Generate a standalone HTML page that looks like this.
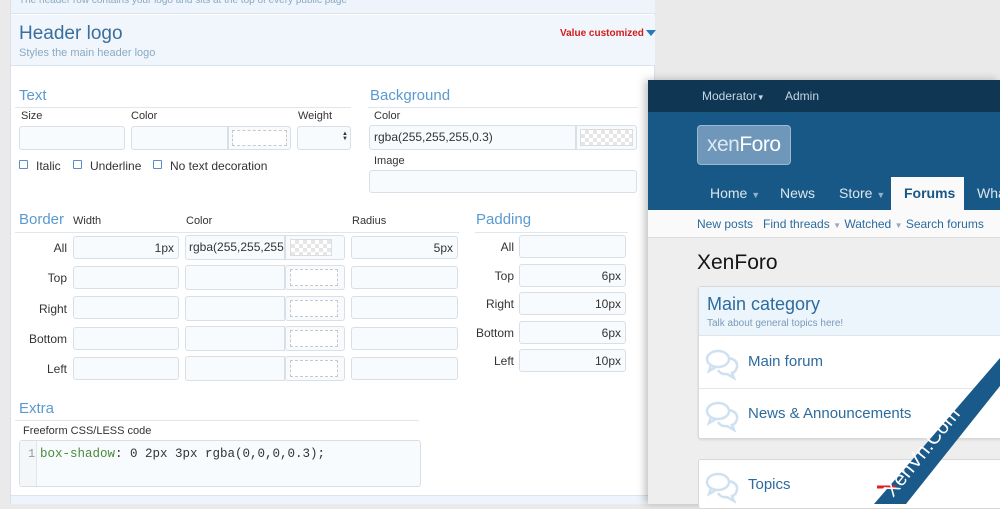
<!DOCTYPE html>
<html><head><meta charset="utf-8"><style>
*{box-sizing:border-box;margin:0;padding:0}
body{width:1000px;height:504px;overflow:hidden;background:#eaeaea;font-family:"Liberation Sans",sans-serif;position:relative;color:#141414}
.a{position:absolute}
.panel{left:10px;top:0;width:645px;height:504px;background:#fff;border-left:1px solid #dde;border-right:1px solid #dde}
.lbl{font-size:11px;color:#333}
.h{font-size:15px;color:#5a9ad0}
.line{height:1px;background:#dfe6ee}
.in{border:1px solid #d8dfe6;background:#f8fbfd;border-radius:3px;font-size:11px;color:#333;line-height:22px;padding:0 4px}
.r{text-align:right}
.sw{border:1px dashed #c8c8c8;background:#fff}
.chk{background:repeating-conic-gradient(#e6e6e6 0 25%,#fff 0 50%) 0 0/8px 8px;border:1px solid #ddd}
.cb{width:9px;height:9px;border:1px solid #5a8fc5;border-radius:1px}
.rl{font-size:12px;color:#333;text-align:right;width:48px}
</style></head><body>
<div class="a panel"></div>
<div class="a" style="left:11px;top:0;width:644px;height:14px;background:#edf4fb;border-bottom:1px solid #dbe3ec"></div>
<div class="a" style="left:19px;top:-5px;font-size:10px;color:#8aa9c4">The header row contains your logo and sits at the top of every public page</div>
<div class="a" style="left:11px;top:15px;width:644px;height:51px;background:#f0f6fc;border-bottom:1px solid #dbe3ec"></div>
<div class="a" style="left:19px;top:23px;font-size:19px;color:#3a6e9c">Header logo</div>
<div class="a" style="left:19px;top:47px;font-size:11px;color:#8aa9c4">Styles the main header logo</div>
<div class="a" style="left:560px;top:28px;font-size:10px;color:#d21c1c;font-weight:bold">Value customized</div>
<div class="a" style="left:646px;top:30px;width:0;height:0;border-left:5px solid transparent;border-right:5px solid transparent;border-top:6px solid #2a77c0"></div>

<div class="a h" style="left:19px;top:87px">Text</div>
<div class="a line" style="left:15px;top:107px;width:260px"></div>
<div class="a line" style="left:274px;top:107px;width:77px"></div>
<div class="a lbl" style="left:21px;top:110px">Size</div>
<div class="a lbl" style="left:131px;top:110px">Color</div>
<div class="a lbl" style="left:298px;top:110px">Weight</div>
<div class="a in" style="left:19px;top:126px;width:106px;height:24px"></div>
<div class="a in" style="left:131px;top:126px;width:97px;height:24px;border-radius:3px 0 0 3px"></div>
<div class="a in" style="left:228px;top:126px;width:63px;height:24px;border-radius:0 3px 3px 0;padding:3px"><div class="sw" style="width:100%;height:100%"></div></div>
<div class="a in" style="left:297px;top:126px;width:54px;height:24px"></div>
<div class="a" style="left:342px;top:132px;font-size:6px;line-height:5px;color:#333">▲<br>▼</div>
<div class="a cb" style="left:19px;top:160px"></div><div class="a lbl" style="left:36px;top:159px;font-size:12px">Italic</div>
<div class="a cb" style="left:73px;top:160px"></div><div class="a lbl" style="left:90px;top:159px;font-size:12px">Underline</div>
<div class="a cb" style="left:153px;top:160px"></div><div class="a lbl" style="left:170px;top:159px;font-size:12px">No text decoration</div>

<div class="a h" style="left:370px;top:87px">Background</div>
<div class="a line" style="left:368px;top:107px;width:270px"></div>
<div class="a lbl" style="left:374px;top:110px">Color</div>
<div class="a in" style="left:369px;top:125px;width:207px;height:25px;line-height:23px;font-size:12px;border-radius:3px 0 0 3px">rgba(255,255,255,0.3)</div>
<div class="a in" style="left:576px;top:125px;width:61px;height:25px;padding:3px;border-radius:0 3px 3px 0"><div class="chk" style="width:100%;height:100%"></div></div>
<div class="a lbl" style="left:374px;top:155px">Image</div>
<div class="a in" style="left:369px;top:170px;width:268px;height:23px"></div>

<div class="a h" style="left:19px;top:211px">Border</div>
<div class="a lbl" style="left:73px;top:215px">Width</div>
<div class="a lbl" style="left:186px;top:215px">Color</div>
<div class="a lbl" style="left:352px;top:215px">Radius</div>
<div class="a line" style="left:15px;top:232px;width:444px"></div>
<div class="a h" style="left:476px;top:211px">Padding</div>
<div class="a line" style="left:475px;top:232px;width:153px"></div>

<div class="a rl" style="left:19px;top:241px">All</div>
<div class="a rl" style="left:19px;top:271px">Top</div>
<div class="a rl" style="left:19px;top:302px">Right</div>
<div class="a rl" style="left:19px;top:332px">Bottom</div>
<div class="a rl" style="left:19px;top:362px">Left</div>

<div class="a in r" style="left:73px;top:236px;width:106px;height:23px;font-size:12px">1px</div>
<div class="a in" style="left:73px;top:266px;width:106px;height:23px"></div>
<div class="a in" style="left:73px;top:296px;width:106px;height:23px"></div>
<div class="a in" style="left:73px;top:327px;width:106px;height:23px"></div>
<div class="a in" style="left:73px;top:357px;width:106px;height:23px"></div>

<div class="a in" style="left:185px;top:235px;width:100px;height:25px;font-size:12px;overflow:hidden;white-space:nowrap;border-radius:3px 0 0 3px;padding:0 3px">rgba(255,255,255,</div>
<div class="a in" style="left:285px;top:235px;width:60px;height:25px;padding:3px 12px 3px 4px;border-radius:0 3px 3px 0"><div class="chk" style="width:100%;height:100%"></div></div>
<div class="a in" style="left:185px;top:265px;width:100px;height:25px;border-radius:3px 0 0 3px"></div><div class="a in" style="left:285px;top:265px;width:60px;height:25px;padding:3px 6px 3px 4px"><div class="sw" style="width:100%;height:100%"></div></div>
<div class="a in" style="left:185px;top:296px;width:100px;height:25px;border-radius:3px 0 0 3px"></div><div class="a in" style="left:285px;top:296px;width:60px;height:25px;padding:3px 6px 3px 4px"><div class="sw" style="width:100%;height:100%"></div></div>
<div class="a in" style="left:185px;top:326px;width:100px;height:25px;border-radius:3px 0 0 3px"></div><div class="a in" style="left:285px;top:326px;width:60px;height:25px;padding:3px 6px 3px 4px"><div class="sw" style="width:100%;height:100%"></div></div>
<div class="a in" style="left:185px;top:356px;width:100px;height:25px;border-radius:3px 0 0 3px"></div><div class="a in" style="left:285px;top:356px;width:60px;height:25px;padding:3px 6px 3px 4px"><div class="sw" style="width:100%;height:100%"></div></div>

<div class="a in r" style="left:351px;top:236px;width:107px;height:23px;font-size:12px">5px</div>
<div class="a in" style="left:351px;top:266px;width:107px;height:23px"></div>
<div class="a in" style="left:351px;top:296px;width:107px;height:23px"></div>
<div class="a in" style="left:351px;top:327px;width:107px;height:23px"></div>
<div class="a in" style="left:351px;top:357px;width:107px;height:23px"></div>

<div class="a rl" style="left:466px;top:240px">All</div>
<div class="a rl" style="left:466px;top:269px">Top</div>
<div class="a rl" style="left:466px;top:297px">Right</div>
<div class="a rl" style="left:466px;top:326px">Bottom</div>
<div class="a rl" style="left:466px;top:354px">Left</div>
<div class="a in" style="left:519px;top:235px;width:107px;height:23px"></div>
<div class="a in r" style="left:519px;top:264px;width:107px;height:23px;font-size:12px">6px</div>
<div class="a in r" style="left:519px;top:292px;width:107px;height:23px;font-size:12px">10px</div>
<div class="a in r" style="left:519px;top:321px;width:107px;height:23px;font-size:12px">6px</div>
<div class="a in r" style="left:519px;top:349px;width:107px;height:23px;font-size:12px">10px</div>

<div class="a h" style="left:19px;top:400px">Extra</div>
<div class="a line" style="left:15px;top:420px;width:404px"></div>
<div class="a lbl" style="left:23px;top:425px">Freeform CSS/LESS code</div>
<div class="a" style="left:19px;top:440px;width:402px;height:47px;border:1px solid #d8dfe6;border-radius:3px;background:#f8fbfd"></div>
<div class="a" style="left:20px;top:441px;width:17px;height:45px;border-right:1px solid #e2e6ea;background:#f4f7fa"></div>
<div class="a" style="left:28px;top:447px;font-family:'Liberation Mono',monospace;font-size:12px;color:#999">1</div>
<div class="a" style="left:40px;top:447px;font-family:'Liberation Mono',monospace;font-size:12.5px;color:#333;white-space:pre"><span style="color:#4a8a3a">box-shadow</span>: 0 2px 3px rgba(0,0,0,0.3);</div>
<div class="a" style="left:11px;top:495px;width:644px;height:9px;background:#edf4fb;border-top:1px solid #dbe3ec"></div>

<!-- overlay -->
<div class="a" style="left:648px;top:80px;width:352px;height:424px;background:#eeeeee;box-shadow:-3px 0 8px rgba(0,0,0,.25)"></div>
<div class="a" style="left:648px;top:80px;width:352px;height:32px;background:#0f3652"></div>
<div class="a" style="left:702px;top:89px;font-size:12px;color:#c5d6e6">Moderator<span style="font-size:8px">▼</span></div>
<div class="a" style="left:785px;top:89px;font-size:12px;color:#c5d6e6">Admin</div>
<div class="a" style="left:648px;top:112px;width:352px;height:98px;background:#185886"></div>
<div class="a" style="left:697px;top:125px;width:94px;height:40px;background:#6f97b9;border:1px solid #9cb9d2;border-radius:4px;font-size:21px;color:#dfe9f2;line-height:38px;padding-left:9px;letter-spacing:-.5px">xen<span style="color:#fff">Foro</span></div>
<div class="a" style="left:710px;top:185px;font-size:14px;color:#dbe6ef">Home <span style="font-size:9px;color:#8fb0cc">▼</span></div>
<div class="a" style="left:780px;top:185px;font-size:14px;color:#dbe6ef">News</div>
<div class="a" style="left:839px;top:185px;font-size:14px;color:#dbe6ef">Store <span style="font-size:9px;color:#8fb0cc">▼</span></div>
<div class="a" style="left:891px;top:177px;width:73px;height:33px;background:#fafafa"></div>
<div class="a" style="left:904px;top:185px;font-size:14px;color:#185886;font-weight:bold">Forums</div>
<div class="a" style="left:977px;top:185px;font-size:14px;color:#dbe6ef">Wha</div>
<div class="a" style="left:648px;top:210px;width:352px;height:28px;background:#fafafa;border-bottom:1px solid #dcdcdc"></div>
<div class="a" style="left:697px;top:217px;font-size:12px;color:#2d6b9e;white-space:nowrap">New posts &nbsp; Find threads <span style="font-size:8px;color:#9ab">▼</span> Watched <span style="font-size:8px;color:#9ab">▼</span> Search forums</div>
<div class="a" style="left:697px;top:251px;font-size:21px;color:#141414">XenForo</div>
<div class="a" style="left:698px;top:286px;width:310px;height:153px;background:#fff;border:1px solid #d8d8d8;border-radius:3px;box-shadow:0 1px 2px rgba(0,0,0,.1)"></div>
<div class="a" style="left:699px;top:287px;width:310px;height:49px;background:#edf5fc;border-bottom:1px solid #dde5ed"></div>
<div class="a" style="left:707px;top:294px;font-size:18px;color:#2d6b9e">Main category</div>
<div class="a" style="left:707px;top:318px;font-size:10px;color:#7a9ab8">Talk about general topics here!</div>
<div class="a" style="left:699px;top:388px;width:310px;height:1px;background:#e6e6e6"></div>
<div class="a" style="left:748px;top:353px;font-size:15px;color:#2d6b9e">Main forum</div>
<div class="a" style="left:748px;top:405px;font-size:15px;color:#2d6b9e">News &amp; Announcements</div>
<div class="a" style="left:698px;top:459px;width:310px;height:50px;background:#fff;border:1px solid #d8d8d8;border-radius:3px"></div>
<div class="a" style="left:748px;top:476px;font-size:15px;color:#2d6b9e">Topics</div>
<svg class="a" style="left:705px;top:348px" width="36" height="160" viewBox="0 0 36 160">
<g fill="none" stroke="#cfe1f0" stroke-width="2.5">
<g><ellipse cx="13" cy="11" rx="11" ry="8"/><path d="M6 17 L4 23 L11 19"/><path d="M24 10 Q33 12 32 19 Q31 24 27 25 L29 30 L22 26 Q16 27 13 22"/></g>
<g transform="translate(0,52)"><ellipse cx="13" cy="11" rx="11" ry="8"/><path d="M6 17 L4 23 L11 19"/><path d="M24 10 Q33 12 32 19 Q31 24 27 25 L29 30 L22 26 Q16 27 13 22"/></g>
<g transform="translate(0,123)"><ellipse cx="13" cy="11" rx="11" ry="8"/><path d="M6 17 L4 23 L11 19"/><path d="M24 10 Q33 12 32 19 Q31 24 27 25 L29 30 L22 26 Q16 27 13 22"/></g>
</g></svg>
<svg class="a" style="left:860px;top:350px" width="140" height="154" viewBox="860 350 140 154">
<polygon points="1000,358 1000,386 906,504 874,504" fill="#1a5a8a"/>
<line x1="877" y1="487" x2="896" y2="487" stroke="#e02020" stroke-width="3"/>
<text x="0" y="0" transform="translate(893,498) rotate(-51)" font-family="Liberation Sans,sans-serif" font-size="20" fill="#fff">XenVn.Com</text>
</svg>
</body></html>
